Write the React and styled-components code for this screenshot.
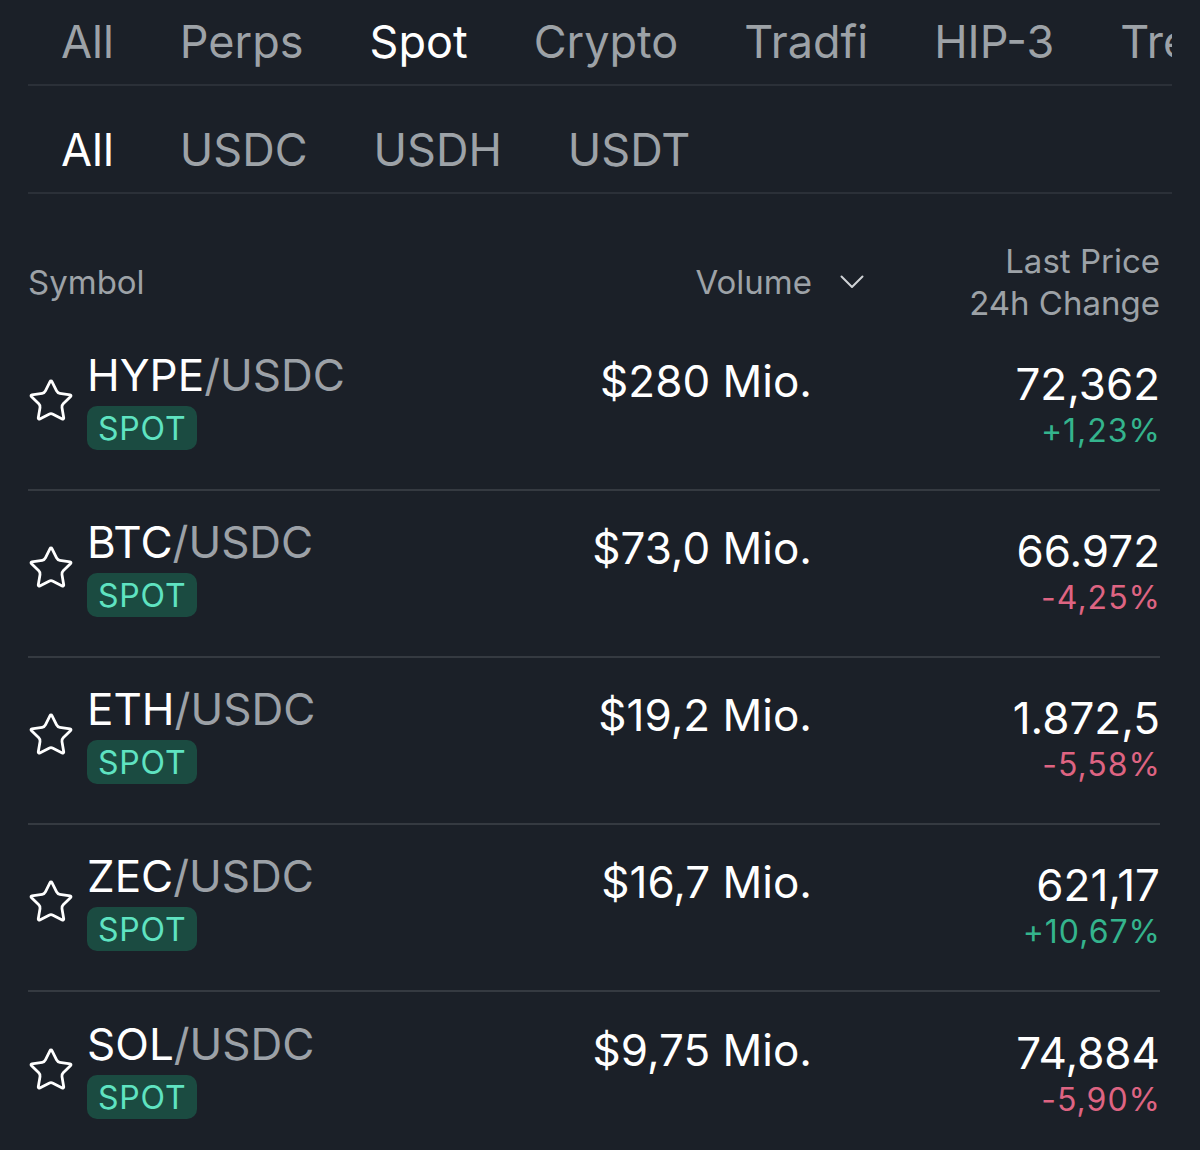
import React from "react"
import styled, { createGlobalStyle } from "styled-components"
import { Star } from "lucide-react"

const GlobalStyle = createGlobalStyle`
    html, body {
        margin: 0;
        padding: 0;
        background: #1b2028;
    }
    body {
        font-family: Inter, "Noto Sans", sans-serif;
        color: #ffffff;
        -webkit-font-smoothing: antialiased;
    }
`

const Page = styled.div`
    width: 1200px;
    height: 1150px;
    overflow: hidden;
    box-sizing: border-box;
    padding: 0 28px;
    background: #1b2028;
`

const TabBar = styled.div`
    display: flex;
    height: 86px;
    margin-top: ${(props) => props.$offset || 0}px;
    border-bottom: 2px solid #2b3038;
    box-sizing: border-box;
    overflow: hidden;
`

const Tab = styled.div`
    flex: none;
    display: flex;
    align-items: center;
    padding: 0 33px 6px;
    font-size: 45px;
    line-height: 1;
    color: ${(props) => (props.$active ? "#ffffff" : "#9da2a7")};
    box-shadow: ${(props) => (props.$active ? "inset 0 -3px 0 #50d2c1" : "none")};
    margin-bottom: -2px;
    height: 88px;
    box-sizing: border-box;
`

const Table = styled.div`
    margin-right: 12px;
`

const HeaderRow = styled.div`
    display: grid;
    grid-template-columns: 1fr 300px 350px;
    align-items: center;
    padding-top: 46px;
    height: 130px;
    box-sizing: border-box;
    font-size: 33px;
    color: #9da2a7;
`

const HeaderCell = styled.div`
    display: flex;
    justify-content: ${(props) => (props.$right ? "flex-end" : "flex-start")};
    align-items: center;
    text-align: ${(props) => (props.$right ? "right" : "left")};
    line-height: 42px;
    margin-right: ${(props) => props.$shift || 0}px;
`

const Chevron = styled.svg`
    flex: none;
    margin-left: 28px;
    margin-right: -52px;
`

const Row = styled.div`
    display: grid;
    grid-template-columns: 1fr 300px 350px;
    align-items: center;
    height: 167px;
    box-sizing: border-box;
    border-bottom: 2px solid #353a41;

    &:last-child {
        border-bottom: none;
    }
`

const SymbolCell = styled.div`
    display: flex;
    align-items: center;
    gap: 12px;
    margin-bottom: 12px;
`

const SymbolText = styled.div`
    display: flex;
    flex-direction: column;
    align-items: flex-start;
`

const Pair = styled.div`
    font-size: 44px;
    line-height: 48px;

    span {
        color: #9ca1a7;
    }
`

const Badge = styled.div`
    margin-top: 7px;
    height: 44px;
    padding: 0 11px;
    display: flex;
    align-items: center;
    border-radius: 10px;
    background: #1b4b41;
    color: #5fe3c1;
    font-size: 32px;
    letter-spacing: 0.8px;
`

const VolumeCell = styled.div`
    text-align: right;
    font-size: 44px;
    line-height: 48px;
    padding-bottom: 52px;
    margin-right: -2px;
`

const PriceCell = styled.div`
    display: flex;
    flex-direction: column;
    align-items: flex-end;
    margin-bottom: 2px;
`

const Price = styled.div`
    font-size: 44px;
    line-height: 48px;
`

const Change = styled.div`
    font-size: 32px;
    line-height: 40px;
    letter-spacing: 1px;
    margin-right: -1px;
    margin-top: 3px;
    color: ${(props) => (props.$up ? "#34b48d" : "#de6482")};
`

const topTabs = ["All", "Perps", "Spot", "Crypto", "Tradfi", "HIP-3", "Trending"]
const quoteTabs = ["All", "USDC", "USDH", "USDT"]

const markets = [
    { base: "HYPE", volume: "$280 Mio.", price: "72,362", change: "+1,23%", up: true },
    { base: "BTC", volume: "$73,0 Mio.", price: "66.972", change: "-4,25%", up: false },
    { base: "ETH", volume: "$19,2 Mio.", price: "1.872,5", change: "-5,58%", up: false },
    { base: "ZEC", volume: "$16,7 Mio.", price: "621,17", change: "+10,67%", up: true },
    { base: "SOL", volume: "$9,75 Mio.", price: "74,884", change: "-5,90%", up: false },
]

export default function App() {
    return (
        <Page>
            <GlobalStyle />
            <TabBar>
                {topTabs.map((t) => (
                    <Tab key={t} $active={t === "Spot"}>{t}</Tab>
                ))}
            </TabBar>
            <TabBar $offset={22}>
                {quoteTabs.map((t) => (
                    <Tab key={t} $active={t === "All"}>{t}</Tab>
                ))}
            </TabBar>
            <Table>
                <HeaderRow>
                    <HeaderCell>Symbol</HeaderCell>
                    <HeaderCell $right $shift={-2}>
                        Volume
                        <Chevron width="24" height="14" viewBox="0 0 24 14" fill="none">
                            <polyline points="1.5,1.5 12,12 22.5,1.5" stroke="#d0d3d6" strokeWidth="2" strokeLinecap="round" strokeLinejoin="round" />
                        </Chevron>
                    </HeaderCell>
                    <HeaderCell $right>
                        Last Price<br />24h Change
                    </HeaderCell>
                </HeaderRow>
                {markets.map((m) => (
                    <Row key={m.base}>
                        <SymbolCell>
                            <Star size={48} strokeWidth={1.4} color="#ffffff" style={{ flex: "none", marginLeft: -1 }} />
                            <SymbolText>
                                <Pair>{m.base}<span>/USDC</span></Pair>
                                <Badge>SPOT</Badge>
                            </SymbolText>
                        </SymbolCell>
                        <VolumeCell>{m.volume}</VolumeCell>
                        <PriceCell>
                            <Price>{m.price}</Price>
                            <Change $up={m.up}>{m.change}</Change>
                        </PriceCell>
                    </Row>
                ))}
            </Table>
        </Page>
    )
}
